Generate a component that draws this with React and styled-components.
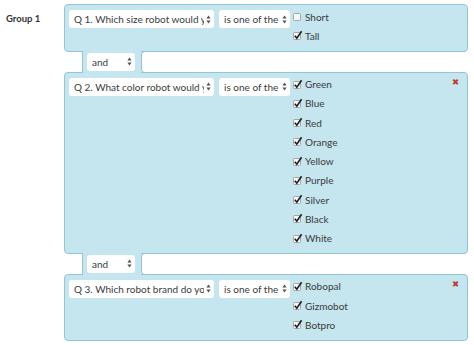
import React from 'react'
import styled, { createGlobalStyle } from 'styled-components'

const GlobalStyle = createGlobalStyle`
    html, body {
        margin: 0;
        padding: 0;
        background: #ffffff;
        overflow: hidden;
    }
    body {
        font-family: Lato, "Open Sans", "Liberation Sans", sans-serif;
        color: #3b3b3b;
    }
`

const BLUE = '#c5e5ef'
const EDGE = '#92c6d6'

const Page = styled.div`
    display: flex;
    padding-top: 4px;
    width: 474px;
`

const GroupLabel = styled.div`
    width: 58px;
    padding: 9px 0 0 6px;
    font-size: 9.5px;
    font-weight: 700;
    color: #333;
`

const Rules = styled.div`
    width: 404px;
    display: flex;
    flex-direction: column;
`

const Panel = styled.div`
    position: relative;
    display: flex;
    align-items: flex-start;
    gap: 5px;
    background: ${BLUE};
    border: 1px solid ${EDGE};
    border-radius: 4px;
    padding: 5px 4px;
`

const Select = styled.div`
    display: flex;
    align-items: center;
    justify-content: space-between;
    box-sizing: border-box;
    width: ${(p) => p.w}px;
    height: 18px;
    padding: 0 3px 0 5px;
    background: #fff;
    border-radius: 3px;
    font-size: 10px;
    color: #3b3b3b;
    white-space: nowrap;
`

const SelectText = styled.span`
    overflow: hidden;
    flex: 1;
    margin-right: 2px;
`

const Options = styled.div`
    display: flex;
    flex-direction: column;
    margin-top: -3px;
    margin-left: -2px;
`

const Option = styled.label`
    display: flex;
    align-items: center;
    gap: 1px;
    height: 19.25px;
    font-size: 10px;
    color: #3b3b3b;
`

const Remove = styled.span`
    position: absolute;
    top: 5px;
    right: 8px;
    font-size: 8.5px;
    font-weight: 700;
    color: #c0392b;
    line-height: 1;
    font-family: "DejaVu Sans", sans-serif;
`

const Connector = styled.div`
    position: relative;
    z-index: 1;
    display: flex;
    height: 22px;
    margin: -1px 3px -1px 18px;
`

const Tab = styled.div`
    display: flex;
    align-items: center;
    box-sizing: border-box;
    width: 59px;
    padding-left: 4px;
    background: ${BLUE};
    border-left: 1px solid ${EDGE};
`

const Blank = styled.div`
    flex: 1;
    box-sizing: border-box;
    background: #fff;
    border: 1px solid ${EDGE};
    border-right: none;
    border-radius: 4px 0 0 4px;
`

const Arrows = () => (
    <svg width="5" height="9" viewBox="0 0 5 9">
        <path d="M2.5 0.5 L4.6 3.6 L0.4 3.6 Z" fill="#555" />
        <path d="M2.5 8.5 L4.6 5.4 L0.4 5.4 Z" fill="#555" />
    </svg>
)

const Box = ({ checked }) => (
    <svg width="11" height="11" viewBox="0 0 11 11">
        <rect x="0.5" y="2.5" width="7" height="7" rx="1" fill="#f6f6f6" stroke="#a5a5a5" />
        {checked && (
            <path d="M1.8 5.8 L3.8 8.2 L8.6 1.2" fill="none" stroke="#1e1e1e" strokeWidth="1.6" />
        )}
    </svg>
)

const Dropdown = ({ w, children }) => (
    <Select w={w}>
        <SelectText>{children}</SelectText>
        <Arrows />
    </Select>
)

const rules = [
    {
        question: 'Q 1. Which size robot would you like?',
        removable: false,
        options: [['Short', false], ['Tall', true]],
    },
    {
        question: 'Q 2. What color robot would you like?',
        removable: true,
        options: [
            ['Green', true],
            ['Blue', true],
            ['Red', true],
            ['Orange', true],
            ['Yellow', true],
            ['Purple', true],
            ['Silver', true],
            ['Black', true],
            ['White', true],
        ],
    },
    {
        question: 'Q 3. Which robot brand do you prefer?',
        removable: true,
        options: [['Robopal', true], ['Gizmobot', true], ['Botpro', true]],
    },
]

export default function App() {
    return (
        <React.Fragment>
            <GlobalStyle />
            <Page>
                <GroupLabel>Group 1</GroupLabel>
                <Rules>
                    {rules.map((rule, i) => (
                        <React.Fragment key={rule.question}>
                            {i > 0 && (
                                <Connector>
                                    <Tab>
                                        <Dropdown w={48}>and</Dropdown>
                                    </Tab>
                                    <Blank />
                                </Connector>
                            )}
                            <Panel>
                                <Dropdown w={145}>{rule.question}</Dropdown>
                                <Dropdown w={71}>is one of the</Dropdown>
                                <Options>
                                    {rule.options.map(([name, on]) => (
                                        <Option key={name}>
                                            <Box checked={on} />
                                            {name}
                                        </Option>
                                    ))}
                                </Options>
                                {rule.removable && <Remove>✖</Remove>}
                            </Panel>
                        </React.Fragment>
                    ))}
                </Rules>
            </Page>
        </React.Fragment>
    )
}
